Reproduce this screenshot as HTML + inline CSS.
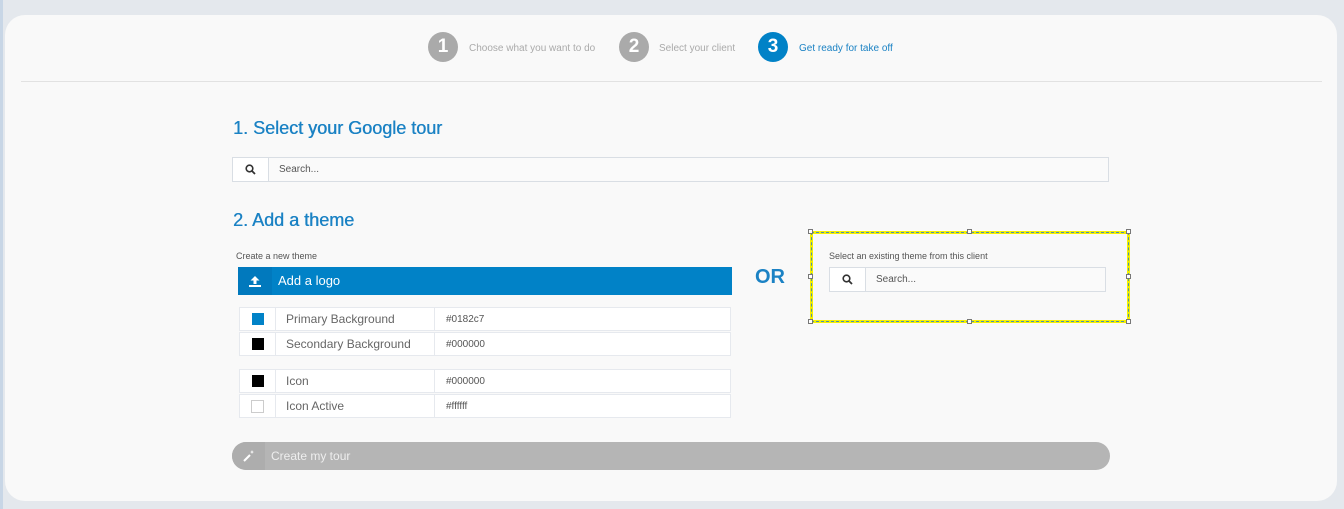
<!DOCTYPE html><html><head><style>
*{box-sizing:border-box;margin:0;padding:0}
body{width:1344px;height:509px;background:#e4e8ed;font-family:"Liberation Sans",sans-serif;position:relative;overflow:hidden}
.card{position:absolute;left:5px;top:15px;width:1332px;height:486px;background:#f9f9f9;border-radius:20px}
.a{position:absolute}
.circ{width:30px;height:30px;border-radius:50%;color:#fff;font-size:19px;font-weight:bold;text-align:center;line-height:30px}
.st{font-size:10px;color:#aaa}
h2{position:absolute;color:#1b82c4;font-size:18px;font-weight:normal;text-shadow:0.4px 0 0 #1b82c4}
.search{position:absolute;border:1px solid #d9dee4;background:#fafafa;height:25px;display:flex}
.search .ic{width:36px;border-right:1px solid #d9dee4;background:#fff;display:flex;align-items:center;justify-content:center}
.search .tx{font-size:10px;color:#555;display:flex;align-items:center;padding-left:10px}
.row{position:absolute;left:239px;width:492px;height:24px;background:#fff;border:1px solid #e6e9ee;display:flex;font-size:12px;color:#666}
.row>div{display:flex;align-items:center}
.row .c1{width:36px;border-right:1px solid #e6e9ee;justify-content:center}
.row .c1 span{width:12px;height:12px;display:block}
.row .c2{width:159px;border-right:1px solid #e6e9ee;padding-left:10px}
.row .c3{padding-left:11px;font-size:10px;color:#555}
.h{position:absolute;width:5px;height:5px;border:1px solid #777;background:#fff}
</style></head><body>
<div class="a" style="left:0;top:0;width:3px;height:509px;background:#c8d6e6"></div>
<div class="card"></div>
<div class="a circ" style="left:428px;top:32px;background:#aaa">1</div>
<div class="a st" style="left:469px;top:43px">Choose what you want to do</div>
<div class="a circ" style="left:619px;top:32px;background:#aaa">2</div>
<div class="a st" style="left:659px;top:43px">Select your client</div>
<div class="a circ" style="left:758px;top:32px;background:#0182c7">3</div>
<div class="a st" style="left:799px;top:43px;color:#1b82c4">Get ready for take off</div>
<div class="a" style="left:21px;top:81px;width:1301px;height:1px;background:#e2e2e2"></div>

<h2 style="left:233px;top:118px">1. Select your Google tour</h2>
<div class="search" style="left:232px;top:157px;width:877px"><div class="ic"><svg width="11" height="11" viewBox="0 0 11 11"><circle cx="4.5" cy="4.5" r="3.3" fill="none" stroke="#333" stroke-width="1.6"/><path d="M7 7l3 3" stroke="#333" stroke-width="1.8"/></svg></div><div class="tx">Search...</div></div>

<h2 style="left:233px;top:210px">2. Add a theme</h2>
<div class="a" style="left:236px;top:251px;font-size:9px;color:#555">Create a new theme</div>
<div class="a" style="left:238px;top:267px;width:494px;height:28px;background:#0182c7;display:flex">
<div style="width:34px;background:#0179bd;display:flex;align-items:center;justify-content:center"><svg width="12" height="11" viewBox="0 0 12 11"><path d="M6 0L1.5 4.5h3V8h3V4.5h3z M0 9h12v2H0z" fill="#fff"/></svg></div>
<div style="color:#fff;font-size:13px;line-height:28px;padding-left:6px">Add a logo</div></div>
<div class="row" style="top:307px"><div class="c1"><span style="background:#0182c7"></span></div><div class="c2">Primary Background</div><div class="c3">#0182c7</div></div>
<div class="row" style="top:332px"><div class="c1"><span style="background:#000"></span></div><div class="c2">Secondary Background</div><div class="c3">#000000</div></div>
<div class="row" style="top:369px"><div class="c1"><span style="background:#000"></span></div><div class="c2">Icon</div><div class="c3">#000000</div></div>
<div class="row" style="top:394px"><div class="c1"><span style="border:1px solid #ccc;width:13px;height:13px"></span></div><div class="c2">Icon Active</div><div class="c3">#ffffff</div></div>
<div class="a" style="left:232px;top:442px;width:878px;height:28px;border-radius:14px;background:#b5b5b5;display:flex">
<div style="width:33px;background:#adadad;border-radius:14px 0 0 14px;display:flex;align-items:center;justify-content:center"><svg width="12" height="12" viewBox="0 0 12 12"><path d="M1 11L7 5" stroke="#fff" stroke-width="2"/><path d="M9 0l.6 1.6L11 2l-1.4.5L9 4l-.6-1.5L7 2l1.4-.4z" fill="#fff"/></svg></div>
<div style="color:#eee;font-size:12px;line-height:28px;padding-left:6px">Create my tour</div></div>

<div class="a" style="left:755px;top:266px;font-size:20px;font-weight:bold;color:#1b82c4">OR</div>
<div class="a" style="left:810px;top:231px;width:320px;height:92px;border:3px solid #f5f000"></div>
<div class="a" style="left:811px;top:232px;width:318px;height:90px;border:1px dashed #4a8fb0"></div>
<div class="h" style="left:808px;top:229px"></div><div class="h" style="left:967px;top:229px"></div><div class="h" style="left:1126px;top:229px"></div>
<div class="h" style="left:808px;top:274px"></div><div class="h" style="left:1126px;top:274px"></div>
<div class="h" style="left:808px;top:319px"></div><div class="h" style="left:967px;top:319px"></div><div class="h" style="left:1126px;top:319px"></div>
<div class="a" style="left:829px;top:251px;font-size:9px;color:#555">Select an existing theme from this client</div>
<div class="search" style="left:829px;top:267px;width:277px"><div class="ic"><svg width="11" height="11" viewBox="0 0 11 11"><circle cx="4.5" cy="4.5" r="3.3" fill="none" stroke="#333" stroke-width="1.6"/><path d="M7 7l3 3" stroke="#333" stroke-width="1.8"/></svg></div><div class="tx">Search...</div></div>
</body></html>
